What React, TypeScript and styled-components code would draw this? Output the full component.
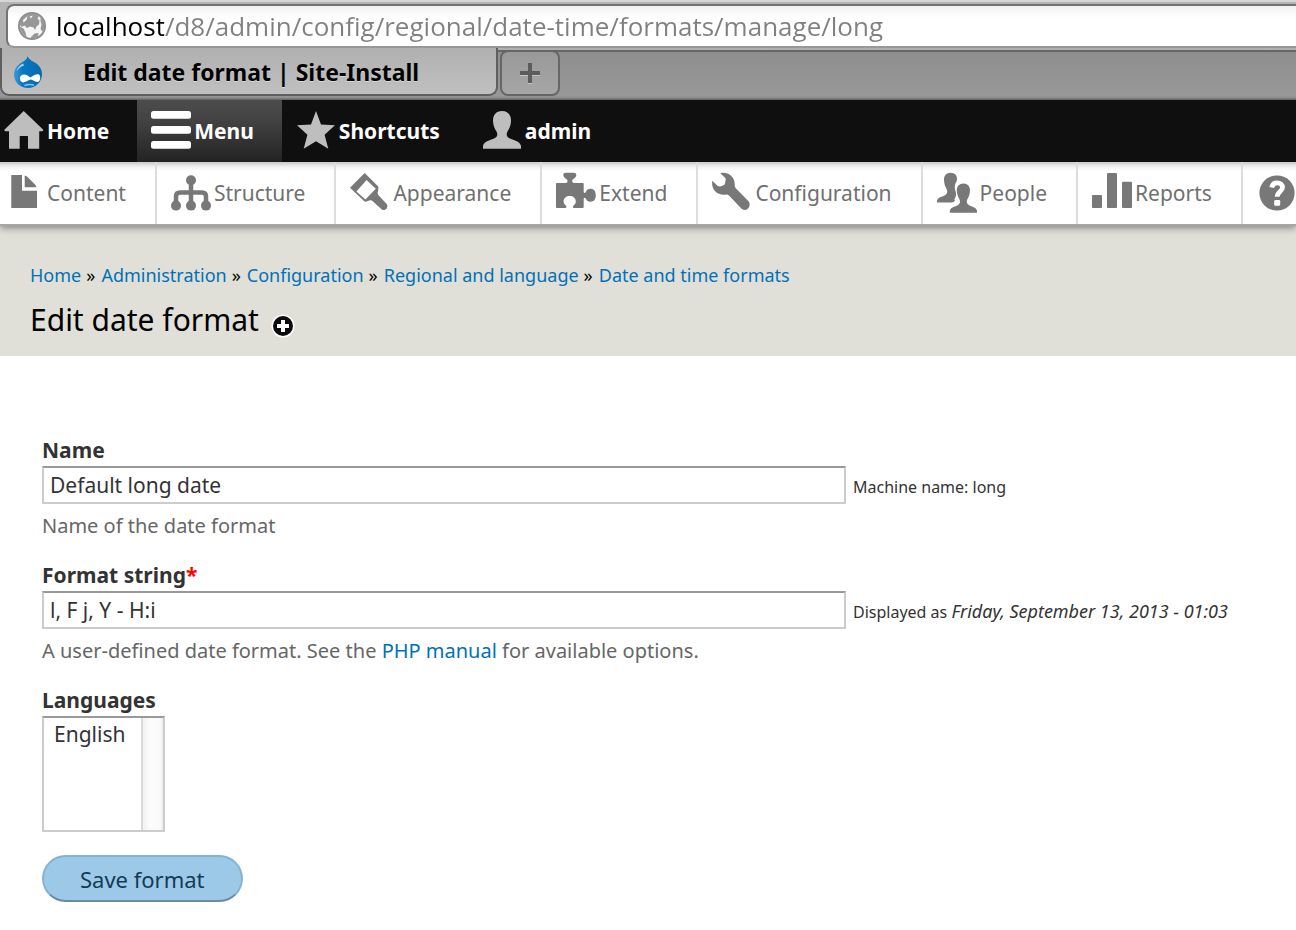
import React from "react";
import styled, { createGlobalStyle, css } from "styled-components";

const GlobalStyle = createGlobalStyle`
  *, *::before, *::after { box-sizing: border-box; }
  body {
    margin: 0;
    background: #fff;
    color: #333;
    font-family: "Noto Sans", "Open Sans", sans-serif;
    font-size: 21px;
  }
  button, input, select { font: inherit; color: inherit; }
`;

/* ---------- Browser chrome ---------- */

const Chrome = styled.header`
  background: linear-gradient(#d6d6d6 0 2px, #b4b4b4 2px, #b0b0b0 100%);
`;

const AddressBar = styled.div`
  padding: 4px 0 0 6px;
`;

const AddressField = styled.label`
  display: flex;
  align-items: center;
  gap: 10px;
  height: 44px;
  padding-left: 10px;
  border: 2px solid #747474;
  border-bottom-color: #989898;
  border-right: 0;
  border-radius: 8px 0 0 8px;
  background: linear-gradient(#f2f2f2, #fff 12px);
`;

const AddressInput = styled.input`
  flex: 1;
  min-width: 0;
  height: 40px;
  padding: 0;
  border: 0;
  outline: 0;
  font-family: "Open Sans", sans-serif;
  font-size: 26px;
  color: #808080;
  background: linear-gradient(90deg, #000 108px, #808080 108px);
  background-clip: text;
  -webkit-background-clip: text;
  -webkit-text-fill-color: transparent;
`;

const TabStrip = styled.div`
  display: flex;
  align-items: flex-start;
  height: 52px;
  background: linear-gradient(
    #b0b0b0 0 2px,
    #666 2px 4px,
    #8e8e8e 4px,
    #989898 48px,
    #8a8a8a 50px,
    #5c5c5c 52px
  );
`;

const ActiveTab = styled.button`
  display: flex;
  align-items: center;
  gap: 40px;
  width: 498px;
  height: 48px;
  padding: 4px 11px 2px;
  border: 2px solid #5f5f5f;
  border-top: 0;
  border-radius: 0 0 9px 9px;
  background: linear-gradient(#b0b0b0, #c0c0c0);
  color: #000;
  font-size: 23px;
  font-weight: 700;
  text-shadow: 0 1px 0 #d8d8d8;
  white-space: nowrap;
`;

const NewTab = styled.button`
  display: grid;
  place-items: center;
  width: 60px;
  height: 46px;
  margin: 2px 0 0 2px;
  padding: 0;
  border: 2px solid #666;
  border-radius: 8px;
  background: linear-gradient(#999, #a6a6a6);
`;

/* ---------- Admin toolbar ---------- */

const Toolbar = styled.nav`
  display: flex;
  height: 62px;
  background: #0f0f0f;
  overflow: hidden;
`;

const itemLayout = css`
  display: flex;
  align-items: center;
  gap: 3px;
  flex: none;
  padding: 0 28px 0 14px;
  border: 0;
  text-decoration: none;
  white-space: nowrap;
  &:first-child { padding-left: 4px; }
`;

const ToolbarItem = styled.button<{ $active?: boolean }>`
  ${itemLayout}
  background: ${(p) => (p.$active ? "linear-gradient(#4c4c4c, #444 30%, #232323)" : "none")};
  color: #fff;
  font-weight: 700;
`;

const Tray = styled.nav`
  position: relative;
  display: flex;
  height: 64px;
  border-bottom: 2px solid #a6a6a4;
  background: linear-gradient(#c9c9c9, #f2f2f2 5px, #fff 9px);
  box-shadow: 0 1px 8px rgba(0, 0, 0, 0.5);
  clip-path: inset(0 0 -12px 0);
`;

const TrayItem = styled.a`
  ${itemLayout}
  padding-right: 29px;
  border-right: 2px solid #dcdcdc;
  color: #707070;
  &:last-child { border-right: 0; padding-right: 0; }
`;

const Icon40 = styled.svg`
  flex: none;
  width: 40px;
  height: 40px;
  overflow: visible;
`;

/* ---------- Page ---------- */

const PageHeader = styled.div`
  padding: 37px 30px 16px;
  background: #e0e0d8;
  color: #000;
`;

const Breadcrumb = styled.ol`
  display: flex;
  margin: 0 0 12px;
  padding: 0;
  list-style: none;
  font-size: 18px;
  line-height: 24px;
  white-space: nowrap;
  li + li::before { content: "»"; margin: 0 6px 0 5px; }
`;

const Link = styled.a`
  color: #0071b8;
  text-decoration: none;
`;

const TitleRow = styled.div`
  display: flex;
  align-items: center;
  gap: 12px;
`;

const Title = styled.h1`
  margin: 0;
  font-size: 30px;
  font-weight: 400;
  line-height: 41px;
`;

const AddShortcut = styled.button`
  display: flex;
  margin-top: 12px;
  padding: 0;
  border: 0;
  background: none;
`;

const Form = styled.form`
  display: flex;
  flex-direction: column;
  align-items: flex-start;
  gap: 21px;
  padding: 78px 42px 28px;
`;

const Field = styled.div`
  width: 100%;
`;

const Label = styled.label`
  display: block;
  font-weight: 700;
  line-height: 32px;
`;

const Required = styled.span`
  color: #f00;
`;

const InputRow = styled.div`
  display: flex;
  align-items: baseline;
  gap: 7px;
  white-space: nowrap;
`;

const control = css`
  border: 2px solid #ccc;
  border-top-color: #999;
  border-radius: 0;
  outline: 0;
`;

const TextInput = styled.input`
  ${control}
  flex: 0 1 804px;
  min-width: 0;
  height: 38px;
  padding: 0 6px;
  background: #fff;
`;

const Suffix = styled.span`
  font-size: 16px;
  em { font-size: 18px; }
`;

const Description = styled.p`
  margin: 10px 0 0;
  color: #666;
  font-size: 20px;
  line-height: 24px;
`;

const ListBox = styled.select`
  ${control}
  display: block;
  width: 123px;
  height: 116px;
  padding: 2px 0;
  overflow: hidden;
  background: linear-gradient(90deg, #fff 97px, #dadada 97px 99px, #f1f1f1 99px, #fcfcfc 106px, #fafafa 116px, #ececec 119px);
  option { padding: 0 10px; line-height: 32px; }
`;

const SaveButton = styled.button`
  height: 47px;
  margin-top: 2px;
  padding: 0 36px;
  border: 2px solid #86b3d0;
  border-bottom-color: #6a8ca3;
  border-radius: 24px;
  background: #9cc9e8;
  color: #133b54;
  font-size: 22px;
  line-height: 40px;
  white-space: nowrap;
`;

/* ---------- Icons ---------- */

const LIGHT = "#bebebe";
const GREY = "#787878";

const HomeIcon = () => (
  <Icon40 viewBox="0 0 40 40" fill={LIGHT} aria-hidden="true">
    <path d="M19.7 0 39 18.6q1 1.4-.8 1.6H35.2V37.7H24V25.5q0-.5-.5-.5H16.2q-.5 0-.5.5V37.7H5V20.2H1.4Q-.4 20 .6 18.6Z" />
  </Icon40>
);

const MenuIcon = () => (
  <Icon40 viewBox="0 0 40 40" fill="#fff" aria-hidden="true">
    <rect y="0" width="40" height="7.7" rx="2.5" />
    <rect y="15" width="40" height="7.7" rx="2.5" />
    <rect y="30" width="40" height="7.7" rx="2.5" />
  </Icon40>
);

const StarIcon = () => (
  <Icon40 viewBox="0 0 40 40" fill={LIGHT} aria-hidden="true">
    <path d="M20 0 25 13.6 39 14.2 28.6 23.8 32.3 37.7 20 30.3 7.7 37.7 11.4 23.8 1 14.2 15 13.6Z" />
  </Icon40>
);

const UserIcon = () => (
  <Icon40 viewBox="0 0 40 40" fill={LIGHT} aria-hidden="true">
    <path d="M20 0C26 0 29 4 29 9.5C29 14 27.5 17.5 25.5 20.5C24 23.5 24.5 26 28 27.5C33 29.5 39 31 39 35.5V37.7H1V35.5C1 31 7 29.5 12 27.5C15.5 26 16 23.5 14.5 20.5C12.5 17.5 11 14 11 9.5C11 4 14 0 20 0Z" />
  </Icon40>
);

const ContentIcon = () => (
  <Icon40 viewBox="0 0 40 40" fill={GREY} aria-hidden="true">
    <path d="M7.3 2H18V17.7H33V35H7.3ZM20.7 2.5Q22.5 2.5 23.5 4L31 11.5Q32.3 12.7 32.3 14.3H20.7Z" />
  </Icon40>
);

const StructureIcon = () => (
  <Icon40 viewBox="0 0 40 40" fill={GREY} aria-hidden="true">
    <path d="M5 32V23.5Q5 19.6 9 19.6H31Q35 19.6 35 23.5V32M20 7V32" fill="none" stroke={GREY} strokeWidth="4.5" />
    <circle cx="20" cy="7.3" r="5" />
    <circle cx="5" cy="32.6" r="5" />
    <circle cx="20" cy="32.6" r="5" />
    <circle cx="35" cy="32.6" r="5" />
  </Icon40>
);

const AppearanceIcon = () => (
  <Icon40 viewBox="0 0 40 40" fill={GREY} aria-hidden="true">
    <path
      fillRule="evenodd"
      d="M14.7 0 28 13.2Q29 14.5 28.3 16.5L27.7 19.5Q27.5 21 28.5 22.2L36.7 31Q38.3 33 36.7 35.5Q34.5 38 31.8 36.5L22.5 28Q21.5 27 20 27.3L16.5 28.6Q15 29 14 28L0 14.7ZM16.6 7 6.4 18.4 15.4 26.6 25.8 15.7Z"
    />
  </Icon40>
);

const ExtendIcon = () => (
  <Icon40 viewBox="0 0 40 40" fill={GREY} aria-hidden="true">
    <path d="M1 10H10Q12 9.8 11.5 7.5C11 5.5 7.3 5 7.3 2Q7.3-.3 9.5-.3H18Q20.3-.3 20.3 2C20.3 5 16.7 5.5 16.2 7.5Q15.8 9.8 18 10H26.7Q27.7 10 27.7 11V19Q28 20.5 29.5 19.5C30.5 17.5 31.5 15.8 34.5 15.8C38 15.8 39.8 18.5 39.8 22.3C39.8 26 38 28.8 34.5 28.8C31.5 28.8 30.5 27 29.5 25.2Q28 24.2 27.7 25.7V34Q27.7 35 26.7 35H18.5Q16.5 35 17 33.5C17.5 32 19.8 31.5 19.8 28.6C19.8 25 17 23 13.7 23C10.4 23 7.6 25 7.6 28.6C7.6 31.5 10 32 10.4 33.5Q10.8 35 9 35H1Q0 35 0 34V11Q0 10 1 10Z" />
  </Icon40>
);

const ConfigIcon = () => (
  <Icon40 viewBox="0 0 40 40" fill={GREY} aria-hidden="true">
    <path d="M8.3.2C15.5-1.5 22.7 3.5 22.7 11Q22.5 13.8 23.5 15L36.5 28.3C39.8 32.5 35.5 39.5 29.8 36L17 22.5Q15.5 21.3 13.5 21.7C6 22.8-1 17.5.2 7.8L5.5 12.7Q6.5 13.7 8 13.4L11 12.6Q12.7 12.2 13 10.5L13.7 6.8Q13.9 5.4 12.8 4.5Z" />
  </Icon40>
);

const PeopleIcon = () => (
  <Icon40 viewBox="0 0 40 40" fill={GREY} aria-hidden="true">
    <path d="M13.6-.3C18-.3 20 2.5 20 6Q20 7.5 19.4 8.8C17.5 11 17.3 15 18.6 18.5C19.5 21 19 23.5 18 25Q16.7 26.8 18 27.5Q17 29.4 14.5 29.4H0V28.5C0 25.5 2.5 24.3 6 23.2C10.5 21.8 11 18.5 9.3 15.5C8 13 7 10 7 6.5C7 2.5 9.5-.3 13.6-.3Z" />
    <path d="M26.4 10.5C30.8 10.5 33 13.5 33 17.3C33 20.5 32 23.5 30.6 25.8C29 28.7 29.5 31.2 33 32.7C36.5 34 40 35 40 38.5V39.7H12.8V38.5C12.8 35 16.3 34 19.8 32.7C23.3 31.2 23.8 28.7 22.2 25.8C20.8 23.5 19.8 20.5 19.8 17.3C19.8 13.5 22 10.5 26.4 10.5Z" />
  </Icon40>
);

const ReportsIcon = () => (
  <Icon40 viewBox="0 0 40 40" fill={GREY} aria-hidden="true">
    <rect x="0" y="22" width="10" height="13" rx="1" />
    <rect x="15" y="0" width="10" height="35" rx="1" />
    <rect x="30" y="8.7" width="10" height="26.3" rx="1" />
  </Icon40>
);

const HelpIcon = () => (
  <Icon40 viewBox="0 0 40 40" aria-hidden="true">
    <circle cx="20" cy="20" r="17.6" fill={GREY} />
    <path d="M14.7 14.5C15.2 11.5 17 9.8 20 9.8C23.3 9.8 25.5 11.7 25.5 14.5C25.5 18.5 20.2 18.8 20.2 23.8" fill="none" stroke="#fff" strokeWidth="4.8" />
    <rect x="17.2" y="27" width="6" height="5.8" rx="1.2" fill="#fff" />
  </Icon40>
);

const GlobeIcon = () => (
  <svg width="28" height="28" viewBox="0 0 28 28" aria-hidden="true">
    <circle cx="14" cy="14" r="13" fill="#f4f4f4" stroke="#8d8d8d" strokeWidth="2" />
    <path fill="#979797" d="M1.5 12C2.5 6 7.5 2 14 1.5Q18 2 21 4L19.5 6.5 21.5 8.5 21 12.5 18.5 14.5 17 18 15.5 15.5 12 14.5 9 16 6.5 13.5 3.5 15Z" />
    <path fill="#979797" d="M22.5 5Q26 8 26.5 14.5L25 20 22.5 17 23.5 12.500 22.5 9ZM1.500 14.5 5.5 16.500 7.500 20.500 8.500 25Q3 21.5 1.500 14.5ZM13 25 16.5 21.5 20.5 21 20 25 13 27Z" />
    <path fill="#f4f4f4" d="M5 8 9.500 4 8.500 8 5.500 10.500ZM11.5 4.5 15 3.5 13 6.5Z" />
  </svg>
);

const DrupalIcon = () => (
  <svg width="30" height="32" viewBox="0 0 30 32" aria-hidden="true">
    <defs>
      <linearGradient id="drop" x1="0" y1="0" x2="1" y2="0">
        <stop offset="0" stopColor="#3b9ad6" />
        <stop offset=".3" stopColor="#0a78c4" />
        <stop offset="1" stopColor="#0569af" />
      </linearGradient>
    </defs>
    <path fill="url(#drop)" d="M14.5 0C16 4 20 5.5 23.5 7.5C27 10 29 14 29 18C29 26 22.5 32 15 32C7.5 32 1 26.5 1 18.5C1 13.5 4 9.5 8 7C11 5 14 4 14.5 0Z" />
    <path fill="#a9d6f2" d="M10 7.5C6.5 9.5 4 12 3.5 15.5C5.5 12 8 10.5 11 9.5Z" />
    <path fill="#fff" d="M7 22C7 18.5 11.5 17.5 14.5 19.5L17.5 21.5C20.5 19.5 23 17.5 26 18.5C28 20 27.5 25.5 25 26C22.5 26 20 24 17.5 23.5C15 24 12.5 26.5 10 26.5C7.5 26 7 24 7 22Z" />
    <path fill="none" stroke="#8fc4e6" strokeWidth="1.5" d="M11.5 29.5Q16.5 28 21 29" />
  </svg>
);

const PlusIcon = () => (
  <svg width="20" height="20" viewBox="0 0 20 20" overflow="visible" aria-hidden="true">
    <path d="M8 1h4v8h8v4h-8v8H8v-8H0V9h8z" fill="#c4c4c4" />
    <path d="M8 0h4v8h8v4h-8v8H8v-8H0V8h8z" fill="#5c5c5c" />
  </svg>
);

const AddIcon = () => (
  <svg width="24" height="24" viewBox="0 0 24 24" aria-hidden="true">
    <circle cx="12" cy="12" r="11.5" fill="#fff" />
    <circle cx="12" cy="12" r="10" fill="#0c0c0c" />
    <path d="M10 6h4v4h4v4h-4v4h-4v-4H6v-4h4z" fill="#fff" />
  </svg>
);

/* ---------- Data ---------- */

const toolbarItems = [
  { label: "Home", Icon: HomeIcon },
  { label: "Menu", Icon: MenuIcon, active: true },
  { label: "Shortcuts", Icon: StarIcon },
  { label: "admin", Icon: UserIcon },
];

const trayItems = [
  { label: "Content", Icon: ContentIcon },
  { label: "Structure", Icon: StructureIcon },
  { label: "Appearance", Icon: AppearanceIcon },
  { label: "Extend", Icon: ExtendIcon },
  { label: "Configuration", Icon: ConfigIcon },
  { label: "People", Icon: PeopleIcon },
  { label: "Reports", Icon: ReportsIcon },
];

const crumbs = ["Home", "Administration", "Configuration", "Regional and language", "Date and time formats"];

export default function App() {
  return (
    <>
      <GlobalStyle />
      <Chrome>
        <AddressBar>
          <AddressField>
            <GlobeIcon />
            <AddressInput
              aria-label="Address"
              defaultValue="localhost/d8/admin/config/regional/date-time/formats/manage/long"
            />
          </AddressField>
        </AddressBar>
        <TabStrip>
          <ActiveTab type="button">
            <DrupalIcon />
            Edit date format | Site-Install
          </ActiveTab>
          <NewTab type="button" aria-label="New tab">
            <PlusIcon />
          </NewTab>
        </TabStrip>
      </Chrome>

      <Toolbar aria-label="Toolbar">
        {toolbarItems.map(({ label, Icon, active }) => (
          <ToolbarItem key={label} type="button" $active={active}>
            <Icon />
            {label}
          </ToolbarItem>
        ))}
      </Toolbar>
      <Tray aria-label="Administration menu">
        {trayItems.map(({ label, Icon }) => (
          <TrayItem key={label} href="#">
            <Icon />
            {label}
          </TrayItem>
        ))}
        <TrayItem href="#" aria-label="Help">
          <HelpIcon />
        </TrayItem>
      </Tray>

      <PageHeader>
        <Breadcrumb>
          {crumbs.map((crumb) => (
            <li key={crumb}>
              <Link href="#">{crumb}</Link>
            </li>
          ))}
        </Breadcrumb>
        <TitleRow>
          <Title>Edit date format</Title>
          <AddShortcut type="button" aria-label="Add to shortcuts">
            <AddIcon />
          </AddShortcut>
        </TitleRow>
      </PageHeader>

      <Form onSubmit={(e) => e.preventDefault()}>
        <Field>
          <Label htmlFor="name">Name</Label>
          <InputRow>
            <TextInput id="name" defaultValue="Default long date" />
            <Suffix>Machine name: long</Suffix>
          </InputRow>
          <Description>Name of the date format</Description>
        </Field>
        <Field>
          <Label htmlFor="format">
            Format string<Required>*</Required>
          </Label>
          <InputRow>
            <TextInput id="format" defaultValue="l, F j, Y - H:i" />
            <Suffix>
              Displayed as <em>Friday, September 13, 2013 - 01:03</em>
            </Suffix>
          </InputRow>
          <Description>
            A user-defined date format. See the <Link href="#">PHP manual</Link> for available options.
          </Description>
        </Field>
        <Field>
          <Label htmlFor="languages">Languages</Label>
          <ListBox id="languages" multiple size={4}>
            <option>English</option>
          </ListBox>
        </Field>
        <SaveButton type="submit">Save format</SaveButton>
      </Form>
    </>
  );
}
